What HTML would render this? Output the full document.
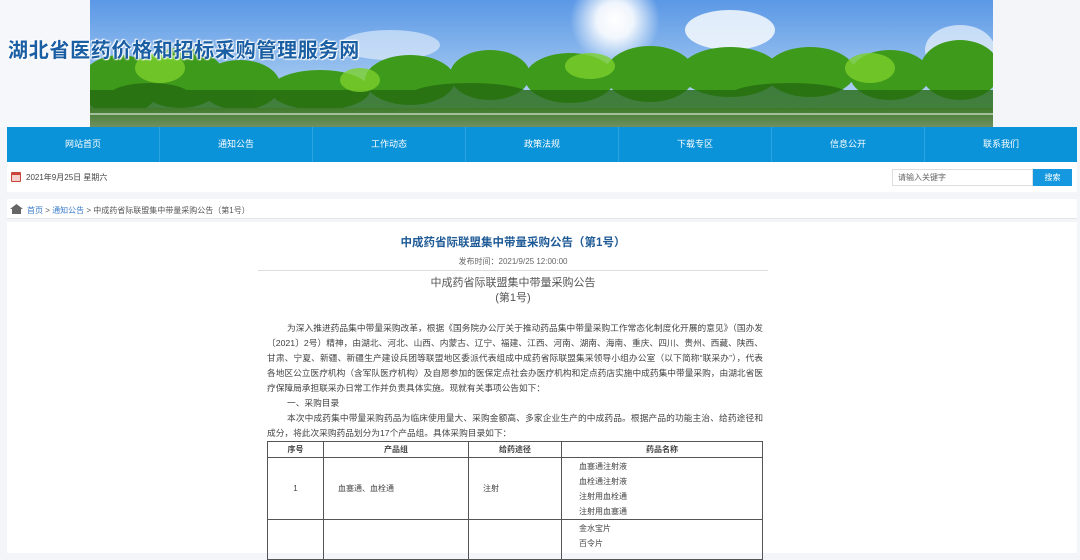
<!DOCTYPE html>
<html><head><meta charset="utf-8">
<style>
*{margin:0;padding:0;box-sizing:border-box}
body{width:1080px;height:553px;overflow:hidden;background:#f3f5f8;font-family:"Liberation Sans","Noto Sans CJK SC",sans-serif;position:relative;color:#333}
.abs{position:absolute}
.nav{left:7px;top:127px;width:1070px;height:35px;background:#0a93d8;display:flex}
.nav div{flex:1;color:#fff;font-size:9px;text-align:center;line-height:35px;border-right:1px solid #2aa3e0}
.nav div:last-child{border:none}
.p{font-size:8.7px;line-height:15px;color:#444;text-align:justify}
table{border-collapse:collapse;font-size:8px;color:#444}
td{border:1px solid #555}
</style></head><body>
<div class="abs" style="left:0;top:0;width:90px;height:127px;background:#f5f7fa"></div>
<svg class="abs" style="left:90px;top:0" width="903" height="127">
<defs>
<linearGradient id="sky" x1="0" y1="0" x2="0" y2="1"><stop offset="0" stop-color="#5b98e6"/><stop offset="0.6" stop-color="#9cc4ef"/><stop offset="1" stop-color="#c8e0f5"/></linearGradient>
<radialGradient id="sun" cx="0.5" cy="0.5" r="0.5"><stop offset="0" stop-color="#fff"/><stop offset="0.4" stop-color="#fff" stop-opacity="0.9"/><stop offset="1" stop-color="#fff" stop-opacity="0"/></radialGradient>
<linearGradient id="wat" x1="0" y1="0" x2="0" y2="1"><stop offset="0" stop-color="#3f7a2a"/><stop offset="1" stop-color="#6f9060"/></linearGradient>
</defs>
<rect width="903" height="127" fill="url(#sky)"/>
<circle cx="525" cy="20" r="45" fill="url(#sun)"/>
<ellipse cx="640" cy="30" rx="45" ry="20" fill="#fff" opacity="0.8"/>
<ellipse cx="300" cy="45" rx="50" ry="15" fill="#fff" opacity="0.5"/>
<ellipse cx="870" cy="50" rx="35" ry="25" fill="#fff" opacity="0.6"/>
<g fill="#3e9a1b">
<ellipse cx="30" cy="85" rx="40" ry="30"/><ellipse cx="90" cy="78" rx="45" ry="30"/><ellipse cx="150" cy="85" rx="40" ry="25"/>
<ellipse cx="230" cy="90" rx="50" ry="20"/><ellipse cx="320" cy="80" rx="45" ry="25"/><ellipse cx="400" cy="75" rx="40" ry="25"/>
<ellipse cx="480" cy="78" rx="45" ry="25"/><ellipse cx="560" cy="74" rx="45" ry="28"/><ellipse cx="640" cy="72" rx="50" ry="25"/>
<ellipse cx="720" cy="72" rx="45" ry="25"/><ellipse cx="800" cy="75" rx="40" ry="25"/><ellipse cx="870" cy="70" rx="40" ry="30"/>
</g>
<g fill="#256a10" opacity="0.8">
<rect x="0" y="90" width="903" height="18"/>
<ellipse cx="60" cy="95" rx="40" ry="12"/><ellipse cx="380" cy="95" rx="60" ry="12"/><ellipse cx="700" cy="95" rx="60" ry="12"/>
</g>
<g fill="#7ccf2c" opacity="0.8"><ellipse cx="70" cy="68" rx="25" ry="15"/><ellipse cx="500" cy="66" rx="25" ry="13"/><ellipse cx="780" cy="68" rx="25" ry="15"/><ellipse cx="270" cy="80" rx="20" ry="12"/></g>
<rect x="0" y="108" width="903" height="19" fill="url(#wat)"/>
<rect x="0" y="113" width="903" height="2" fill="#d9e6e0" opacity="0.6"/>
</svg>
<div class="abs" style="left:8px;top:34px;font-size:20px;font-weight:bold;color:#1a5ea3;letter-spacing:0.7px;text-shadow:0 0 2px #fff,0 0 2px #fff,1px 1px 1px #fff,-1px -1px 1px #fff">湖北省医药价格和招标采购管理服务网</div>
<div class="abs nav"><div>网站首页</div><div>通知公告</div><div>工作动态</div><div>政策法规</div><div>下载专区</div><div>信息公开</div><div>联系我们</div></div>
<div class="abs" style="left:7px;top:162px;width:1070px;height:30px;background:#fff"></div>
<div class="abs" style="left:11px;top:172px;width:10px;height:10px;background:#c8453a;border-radius:1px"><div style="margin:3px 1px 0;height:6px;background:#f6d0cc"></div></div>
<div class="abs" style="left:26px;top:172px;font-size:8px;color:#444">2021年9月25日 星期六</div>
<div class="abs" style="left:892px;top:169px;width:141px;height:17px;border:1px solid #ddd;background:#fff;font-size:8px;color:#666;line-height:15px;padding-left:5px">请输入关键字</div>
<div class="abs" style="left:1033px;top:169px;width:39px;height:17px;background:#1598e0;color:#fff;font-size:8px;text-align:center;line-height:17px">搜索</div>
<div class="abs" style="left:7px;top:199px;width:1070px;height:20px;background:#fff;border-bottom:1px solid #e5e5e5"></div>
<svg class="abs" style="left:10px;top:204px" width="13" height="10"><path d="M0 5L6.5 0L13 5H11V10H2V5Z" fill="#666"/></svg>
<div class="abs" style="left:27px;top:205px;font-size:8px;color:#555"><span style="color:#3a7bc8">首页</span> &gt; <span style="color:#3a7bc8">通知公告</span> &gt; 中成药省际联盟集中带量采购公告（第1号）</div>
<div class="abs" style="left:7px;top:222px;width:1070px;height:331px;background:#fff"></div>
<div class="abs" style="left:258px;top:234px;width:510px;text-align:center;font-size:11.5px;font-weight:bold;color:#1e5a96">中成药省际联盟集中带量采购公告（第1号）</div>
<div class="abs" style="left:258px;top:256px;width:510px;text-align:center;font-size:8px;color:#666">发布时间：2021/9/25 12:00:00</div>
<div class="abs" style="left:258px;top:270px;width:510px;height:1px;background:#ddd"></div>
<div class="abs" style="left:258px;top:276px;width:510px;text-align:center;font-size:11px;line-height:15px;color:#555">中成药省际联盟集中带量采购公告<br>(第1号)</div>
<div class="abs p" style="left:267px;top:321px;width:496px">
<div style="text-indent:20px">为深入推进药品集中带量采购改革，根据《国务院办公厅关于推动药品集中带量采购工作常态化制度化开展的意见》（国办发〔2021〕2号）精神，由湖北、河北、山西、内蒙古、辽宁、福建、江西、河南、湖南、海南、重庆、四川、贵州、西藏、陕西、甘肃、宁夏、新疆、新疆生产建设兵团等联盟地区委派代表组成中成药省际联盟集采领导小组办公室（以下简称“联采办”），代表各地区公立医疗机构（含军队医疗机构）及自愿参加的医保定点社会办医疗机构和定点药店实施中成药集中带量采购，由湖北省医疗保障局承担联采办日常工作并负责具体实施。现就有关事项公告如下：</div>
<div style="text-indent:20px">一、采购目录</div>
<div style="text-indent:20px">本次中成药集中带量采购药品为临床使用量大、采购金额高、多家企业生产的中成药品。根据产品的功能主治、给药途径和成分，将此次采购药品划分为17个产品组。具体采购目录如下：</div>
</div>
<table class="abs" style="left:267px;top:441px;width:496px">
<tr style="height:16px;font-weight:bold;text-align:center"><td style="width:56px">序号</td><td style="width:145px">产品组</td><td style="width:93px">给药途径</td><td>药品名称</td></tr>
<tr style="height:62px"><td style="text-align:center">1</td><td style="padding-left:14px">血塞通、血栓通</td><td style="padding-left:14px">注射</td><td style="padding-left:17px;line-height:15px">血塞通注射液<br>血栓通注射液<br>注射用血栓通<br>注射用血塞通</td></tr>
<tr style="height:40px;vertical-align:top"><td></td><td></td><td></td><td style="padding-left:17px;line-height:15px;padding-top:1px">金水宝片<br>百令片</td></tr>
</table>
</body></html>
